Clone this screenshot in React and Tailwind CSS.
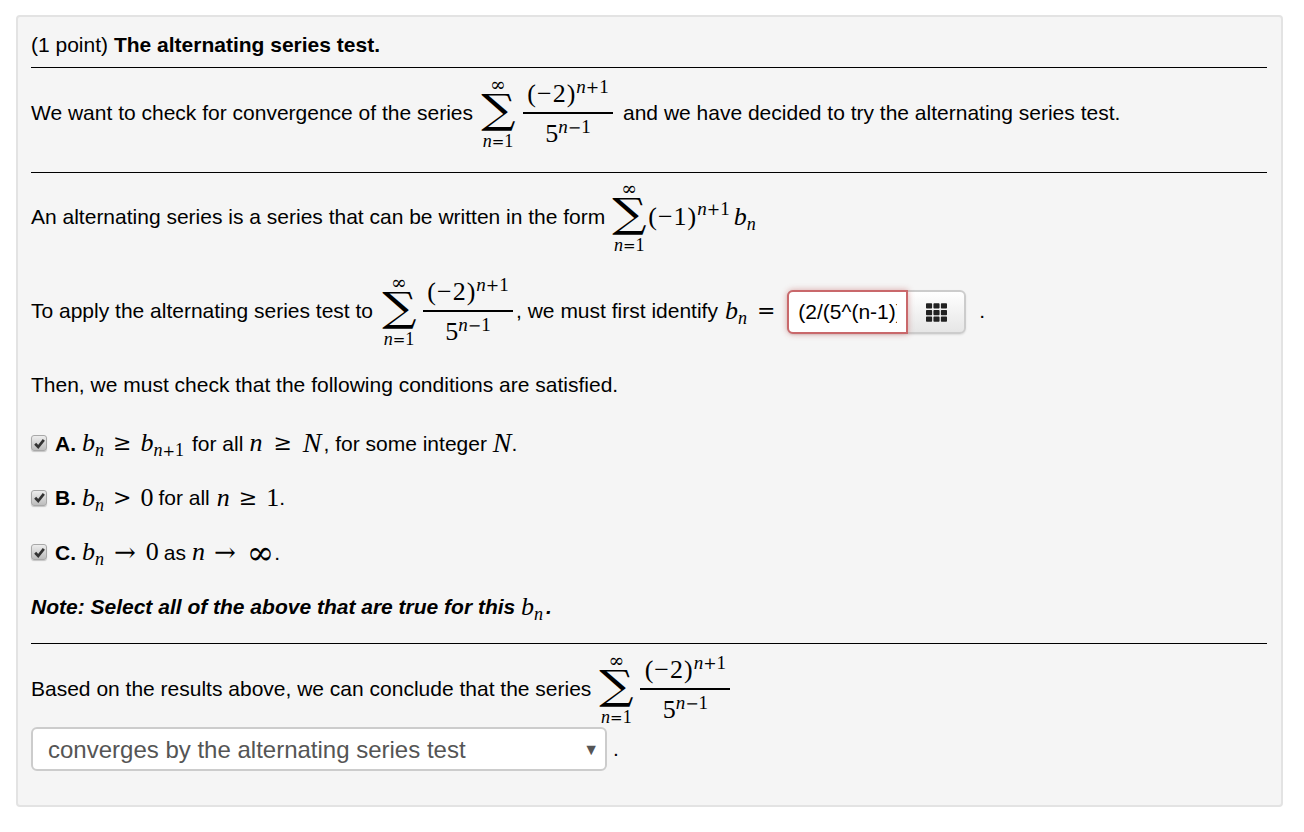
import React from "react";
import { FaTh } from "react-icons/fa";

const serif = "font-['Liberation_Serif',serif]";
const op = "font-['DejaVu_Serif',serif]";

const V = ({ children, className = "" }) => (
  <span className={`${serif} italic text-[26px] leading-none text-black ${className}`}>{children}</span>
);
const M = ({ children, className = "" }) => (
  <span className={`${serif} text-[26px] leading-none text-black ${className}`}>{children}</span>
);
const O = ({ children, className = "" }) => (
  <span className={`${op} text-[22px] leading-none text-black ${className}`}>{children}</span>
);
const Sup = ({ children, plus, className = "" }) => (
  <span className={`${serif} text-[19px] leading-none whitespace-nowrap ${className}`}>
    <i>n</i>
    <span className={`${op} text-[16px]`}>{plus}</span>1
  </span>
);
const Bn = ({ plain }) => (
  <span className="inline-flex items-baseline">
    <V>b</V>
    <span className={`${serif} text-[18px] leading-none relative top-[5px]`}>
      <i>n</i>
      {plain ? <><span className={`${op} text-[15px]`}>+</span>1</> : null}
    </span>
  </span>
);

const Sum = () => (
  <span className={`${serif} inline-flex flex-col items-center w-[38px] text-black shrink-0`}>
    <span className={`${op} text-[19px] leading-[14px] h-[14px]`}>∞</span>
    <span className={`${op} text-[40px] leading-[36px] h-[40px] scale-x-[1.2]`}>∑</span>
    <span className="text-[18px] leading-[16px] h-[16px] mt-[2px] whitespace-nowrap">
      <i>n</i>
      <span className={`${op} text-[15px]`}>=</span>1
    </span>
  </span>
);

const Frac = () => (
  <span className={`${serif} inline-flex flex-col items-center w-[90px] text-black shrink-0`}>
    <span className="h-[35px] flex items-end pb-[5px] whitespace-nowrap">
      <span className="text-[26px] leading-none tracking-[1px]">(−2)</span>
      <Sup plus="+" className="relative -top-[11px]" />
    </span>
    <span className="w-full h-[2px] bg-black" />
    <span className="h-[35px] flex items-start pt-[3px] whitespace-nowrap">
      <span className="text-[26px] leading-none relative top-[4px]">5</span>
      <Sup plus="−" />
    </span>
  </span>
);

const Rule = ({ className = "" }) => <hr className={`border-0 h-px bg-black w-full ${className}`} />;

const Check = () => (
  <span className="w-[16px] h-[16px] rounded-[3px] bg-gradient-to-b from-[#ededed] to-[#bdbdbd] border border-[#a8a8a8] shadow-[0_1px_1px_rgba(0,0,0,0.2)] flex items-center justify-center shrink-0">
    <svg width="13" height="13" viewBox="0 0 12 12">
      <path d="M2 6.2 4.8 9.2 10 2.6" fill="none" stroke="#333" strokeWidth="2.5" />
    </svg>
  </span>
);

const Row = ({ className = "", children }) => (
  <div className={`flex items-center whitespace-nowrap ${className}`}>{children}</div>
);

const Choice = ({ label, children }) => (
  <Row className="h-[54.5px]">
    <Check />
    <b className="ml-[8px] mr-[6px]">{label}</b>
    {children}
  </Row>
);

export default function App() {
  return (
    <div className="h-[832px] bg-white pt-[15px] px-[16px] font-['Liberation_Sans',Arial,sans-serif] text-[21px] text-black">
      <div className="w-[1267px] h-[792px] bg-[#f5f5f5] border-2 border-[#e3e3e3] rounded-[4px] pl-[13px] pr-[14px] pt-[13px]">
        <Row className="h-[30px]">
          (1 point)&nbsp;<b>The alternating series test.</b>
        </Row>
        <Rule className="mt-[7px]" />
        <Row className="h-[88px] mt-[1px]">
          We want to check for convergence of the series
          <span className="ml-[6px] mr-[6px] flex"><Sum /></span>
          <Frac />
          <span className="ml-[10px]">and we have decided to try the alternating series test.</span>
        </Row>
        <Rule className="mt-[15px]" />
        <Row className="h-[88px]">
          An alternating series is a series that can be written in the form
          <span className="ml-[5px] flex"><Sum /></span>
          <span className="flex items-baseline">
            <M className="tracking-[1px]">(−1)</M>
            <Sup plus="+" className="relative -top-[10px] mr-[4px]" />
            <Bn />
          </span>
        </Row>
        <Row className="h-[100px]">
          To apply the alternating series test to
          <span className="ml-[7px] mr-[5px] flex"><Sum /></span>
          <Frac />
          <span className="ml-[3px] mr-[7px]">, we must first identify</span>
          <Bn />
          <O className="ml-[10px] mr-[12px]">=</O>
          <span className="flex mt-[2px] h-[44px] w-[179px] rounded-[6px] bg-gradient-to-b from-white to-[#e6e6e6] border-2 border-[#ccc] shadow-[0_1px_2px_rgba(0,0,0,0.1)]">
            <span className="-m-[2px] mr-0 w-[121px] h-[44px] bg-white border-2 border-[#c9686b] rounded-l-[6px] shadow-[0_0_6px_rgba(185,74,72,0.45)] flex items-center pl-[9px]">
              <span className="w-[99px] overflow-hidden">(2/(5^(n-1))</span>
            </span>
            <span className="flex-1 flex items-center justify-center">
              <FaTh className="text-[#222] text-[21px]" />
            </span>
          </span>
          <span className="ml-[13px]">.</span>
        </Row>
        <Row className="h-[47px]">Then, we must check that the following conditions are satisfied.</Row>
        <div className="mt-[8px]">
          <Choice label="A.">
            <Bn />
            <O className="mx-[9px]">≥</O>
            <Bn plain />
            <span className="ml-[8px] mr-[6px]">for all</span>
            <V>n</V>
            <O className="mx-[11px]">≥</O>
            <V className="text-[28px] mr-[2px]">N</V>
            <span>, for some integer&nbsp;</span>
            <V className="text-[28px]">N</V>
            <span>.</span>
          </Choice>
          <Choice label="B.">
            <Bn />
            <O className="mx-[9px]">&gt;</O>
            <M>0</M>
            <span className="ml-[5px] mr-[7px]">for all</span>
            <V>n</V>
            <O className="mx-[9px]">≥</O>
            <M>1</M>
            <span>.</span>
          </Choice>
          <Choice label="C.">
            <Bn />
            <O className="mx-[10px] text-[26px]">→</O>
            <M>0</M>
            <span className="ml-[5px] mr-[6px]">as</span>
            <V>n</V>
            <O className="ml-[9px] mr-[11px] text-[26px]">→</O>
            <O className="text-[33px]">∞</O>
            <span>.</span>
          </Choice>
        </div>
        <Row className="h-[54px]">
          <b><i>Note: Select all of the above that are true for this&nbsp;</i></b>
          <Bn />
          <b className="ml-[3px]"><i>.</i></b>
        </Row>
        <Rule className="mt-[9px]" />
        <Row className="h-[90px]">
          Based on the results above, we can conclude that the series
          <span className="ml-[6px] mr-[5px] flex"><Sum /></span>
          <Frac />
        </Row>
        <Row className="h-[44px] -mt-[7px]">
          <span className="w-[576px] h-[44px] bg-white border-2 border-[#ccc] rounded-[6px] pl-[15px] pr-[6px] pt-[2px] flex items-center justify-between text-[24px] text-[#555]">
            converges by the alternating series test
            <span className="text-[16px] text-[#555]">▼</span>
          </span>
          <span className="ml-[6px]">.</span>
        </Row>
      </div>
    </div>
  );
}
